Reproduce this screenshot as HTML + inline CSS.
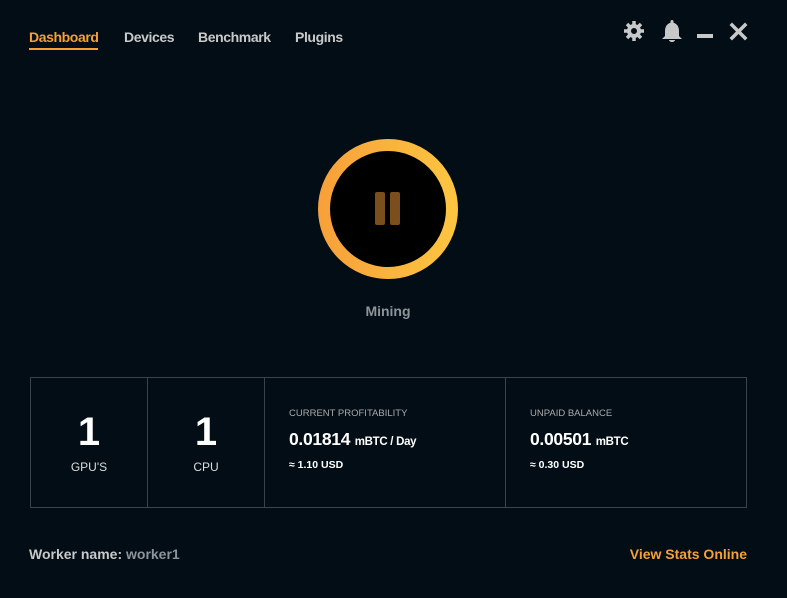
<!DOCTYPE html>
<html><head><meta charset="utf-8"><style>
*{margin:0;padding:0;box-sizing:border-box}
body{width:787px;height:598px;background:#020d16;font-family:"Liberation Sans",sans-serif;position:relative;overflow:hidden;color:#fff}
.nav{position:absolute;top:29px;font-size:14px;font-weight:bold;color:#c9c9c9;letter-spacing:-0.4px}
.abs{position:absolute}
.box{position:absolute;left:30px;top:377px;width:717px;height:131px;border:1px solid #3a434b}
.div{position:absolute;top:0;width:1px;height:129px;background:#3a434b}
.big{position:absolute;font-size:40px;font-weight:bold;text-align:center;width:116px;top:32px}
.lab{position:absolute;font-size:12px;color:#ddd;text-align:center;width:116px;top:82px}
.small{position:absolute;font-size:9.5px;color:#aaa;top:30px}
.val{position:absolute;font-size:17.5px;font-weight:bold;top:51px;letter-spacing:-0.3px}
.val span{font-size:11.5px}
.usd{position:absolute;font-size:10.5px;font-weight:bold;top:81px}
</style></head><body>
<div class="nav" style="left:29px;color:#f7a035">Dashboard</div>
<div class="abs" style="left:29px;top:48px;width:69px;height:2px;background:#f7a035"></div>
<div class="nav" style="left:124px">Devices</div>
<div class="nav" style="left:198px">Benchmark</div>
<div class="nav" style="left:295px">Plugins</div>
<svg class="abs" style="left:620px;top:18px" width="130" height="28" viewBox="0 0 130 28">
<g fill="#c8c8c8">
<circle cx="14" cy="13" r="7"/>
<g stroke="#c8c8c8" stroke-width="3.5"><line x1="14" y1="3" x2="14" y2="23"/><line x1="4" y1="13" x2="24" y2="13"/><line x1="7" y1="6" x2="21" y2="20"/><line x1="21" y1="6" x2="7" y2="20"/></g>
<circle cx="14" cy="13" r="3" fill="#020d16"/>
<path d="M52 4 Q45 6 45 13 L45 18 L42 21 L62 21 L59 18 L59 13 Q59 6 52 4Z"/>
<circle cx="52" cy="3.5" r="1.5"/><path d="M49 22 h6 a3 2 0 0 1 -6 0z"/>
<rect x="77" y="16" width="16" height="4"/>
</g>
<g stroke="#c8c8c8" stroke-width="3.5" stroke-linecap="square"><line x1="112" y1="7" x2="125" y2="20"/><line x1="125" y1="7" x2="112" y2="20"/></g>
</svg>
<svg class="abs" style="left:318px;top:139px" width="140" height="140">
<defs><linearGradient id="g" x1="0" x2="1"><stop offset="0" stop-color="#f8a13a"/><stop offset="1" stop-color="#fcc440"/></linearGradient></defs>
<circle cx="70" cy="70" r="64" fill="#000" stroke="url(#g)" stroke-width="12"/>
<rect x="57" y="53" width="10" height="33" rx="2" fill="#7a4e1d"/>
<rect x="72" y="53" width="10" height="33" rx="2" fill="#7a4e1d"/>
</svg>
<div class="abs" style="left:0;width:776px;text-align:center;top:303px;font-size:14px;font-weight:bold;color:#8e9499">Mining</div>
<div class="box">
<div class="div" style="left:116px"></div><div class="div" style="left:233px"></div><div class="div" style="left:474px"></div>
<div class="big" style="left:0">1</div><div class="lab" style="left:0">GPU'S</div>
<div class="big" style="left:117px">1</div><div class="lab" style="left:117px">CPU</div>
<div class="small" style="left:258px">CURRENT PROFITABILITY</div>
<div class="val" style="left:258px">0.01814 <span>mBTC / Day</span></div>
<div class="usd" style="left:258px">≈ 1.10 USD</div>
<div class="small" style="left:499px">UNPAID BALANCE</div>
<div class="val" style="left:499px">0.00501 <span>mBTC</span></div>
<div class="usd" style="left:499px">≈ 0.30 USD</div>
</div>
<div class="abs" style="left:29px;top:546px;font-size:14px;font-weight:bold;color:#c9c9c9">Worker name: <span style="color:#8e9499">worker1</span></div>
<div class="abs" style="right:40px;top:546px;font-size:14px;font-weight:bold;color:#f7a035">View Stats Online</div>
</body></html>
